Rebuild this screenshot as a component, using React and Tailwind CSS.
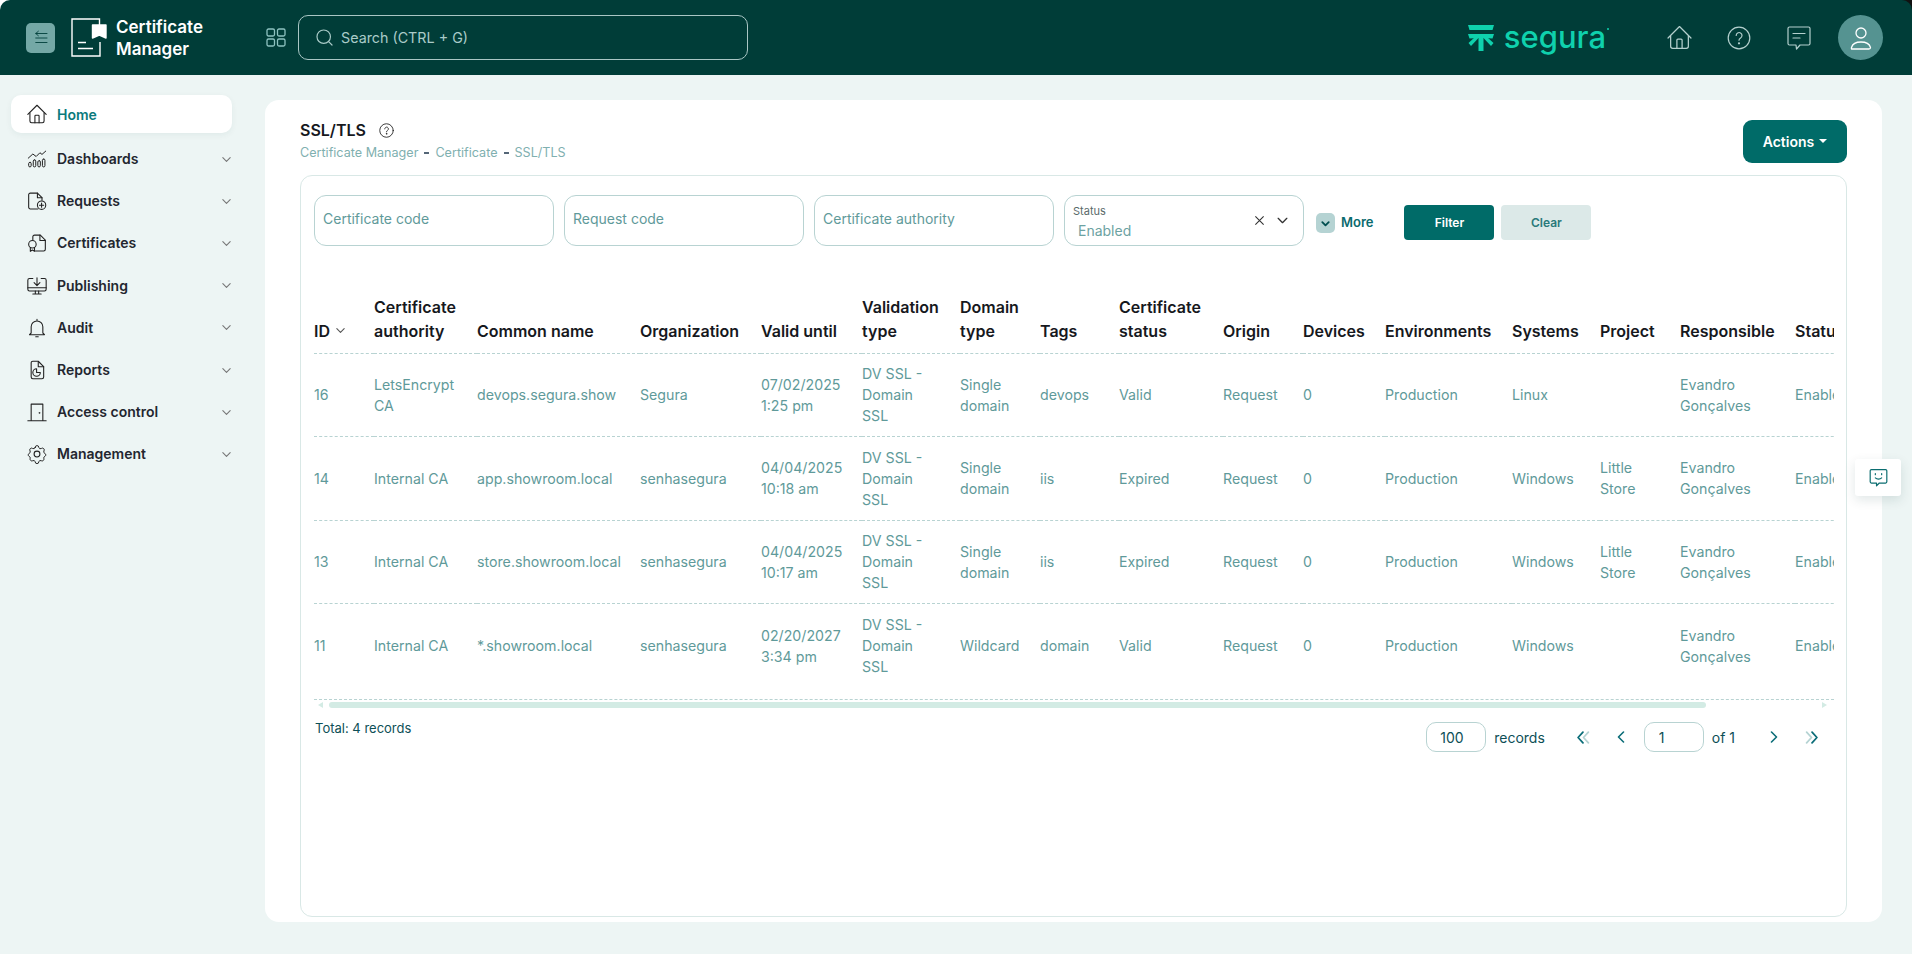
import React from "react";

const Svg = ({ className = "", children, vb = "0 0 24 24", sw = 1.4 }) => (
  <svg viewBox={vb} className={className} fill="none" stroke="currentColor" strokeWidth={sw} strokeLinecap="round" strokeLinejoin="round">
    {children}
  </svg>
);

const House = ({ className, sw }) => (
  <Svg className={className} sw={sw}>
    <path d="M1 12.500 12 1.500l11 11" />
    <path d="M3.500 10.500V20.500a2 2 0 0 0 2 2h13a2 2 0 0 0 2-2v-10" />
    <path d="M9.500 22.500v-8a1 1 0 0 1 1-1h3a1 1 0 0 1 1 1v8" />
  </Svg>
);
const Dash = ({ className }) => (
  <Svg className={className} sw={1.2}>
    <path d="M1.500 11 7 6l4 3 4.500-4.500 2.500 2 4.500-4" />
    <rect x="2" y="16" width="3" height="5.500" rx="1.500" />
    <rect x="7.500" y="13" width="3" height="8.500" rx="1.500" />
    <rect x="13" y="14" width="3" height="7.500" rx="1.500" />
    <rect x="18.500" y="12" width="3" height="9.500" rx="1.500" />
  </Svg>
);
const ReqIcon = ({ className }) => (
  <Svg className={className} sw={1.3}>
    <path d="M13 21.500H4a2 2 0 0 1-2-2v-15a2 2 0 0 1 2-2h8.500l5.500 5.500v3" />
    <path d="M12.500 2.500V8H18" />
    <circle cx="17.500" cy="17" r="5" />
    <path d="M17.500 14.500v5M15 17h5" />
  </Svg>
);
const CertIcon = ({ className }) => (
  <Svg className={className} sw={1.3}>
    <path d="M7 8V4.500a2 2 0 0 1 2-2h7l6 6v11a2 2 0 0 1-2 2H10" />
    <path d="M15.500 2.500V9H22" />
    <circle cx="6.500" cy="13.500" r="4.500" />
    <path d="M4 17.500V22l2.500-1.500L9 22v-4.500" />
  </Svg>
);
const Monitor = ({ className }) => (
  <Svg className={className} sw={1.3}>
    <path d="M7 3H3a2 2 0 0 0-2 2v11a2 2 0 0 0 2 2h18a2 2 0 0 0 2-2V5a2 2 0 0 0-2-2h-4" />
    <path d="M12 2v9M8.500 8l3.500 3.500L15.500 8" />
    <path d="M1 14h22M10 18v3.500M14 18v3.500M7 21.500h10" />
  </Svg>
);
const Bell = ({ className }) => (
  <Svg className={className} sw={1.3}>
    <path d="M12 1.500v2M5 18V10.500a7 7 0 0 1 14 0V18l2 2H3l2-2Z" />
    <path d="M10.500 22.500h3" />
  </Svg>
);
const Report = ({ className }) => (
  <Svg className={className} sw={1.3}>
    <path d="M13.500 1.500H7a2 2 0 0 0-2 2v17a2 2 0 0 0 2 2h11a2 2 0 0 0 2-2V8l-6.500-6.500Z" />
    <path d="M13.500 2v6H20" />
    <path d="M11.500 10.500a4.500 4.500 0 1 0 4.500 4.500h-4.500v-4.500Z" />
  </Svg>
);
const Door = ({ className }) => (
  <Svg className={className} sw={1.3}>
    <path d="M1 22.500h22M5 22.500V2.500h14v20" />
    <circle cx="15" cy="13" r=".4" />
  </Svg>
);
const Gear = ({ className }) => (
  <Svg className={className} sw={1.3}>
    <path d="M9.600 3.200a2.400 2.400 0 0 1 4.800 0 2.400 2.400 0 0 0 3.500 1.400 2.400 2.400 0 0 1 3.300 3.400 2.400 2.400 0 0 0 1.400 3.200 2.400 2.400 0 0 1 0 4 2.400 2.400 0 0 0-1.400 3.200 2.400 2.400 0 0 1-3.400 2.600 2.400 2.400 0 0 0-3.400 1.400 2.400 2.400 0 0 1-4.800 0 2.400 2.400 0 0 0-3.400-1.400 2.400 2.400 0 0 1-3.400-2.600 2.400 2.400 0 0 0-1.400-3.200 2.400 2.400 0 0 1 0-4 2.400 2.400 0 0 0 1.400-3.200 2.400 2.400 0 0 1 3.300-3.400 2.400 2.400 0 0 0 3.500-1.400Z" transform="translate(1.200 1.200) scale(.9)" />
    <circle cx="12" cy="12" r="3.500" />
  </Svg>
);
const Chev = ({ className }) => (
  <Svg className={className} vb="0 0 12 12" sw={1.2}>
    <path d="M2 4l4 4 4-4" />
  </Svg>
);
const Help = ({ className, sw }) => (
  <svg viewBox="0 0 24 24" className={className} fill="none" stroke="currentColor" strokeWidth={sw} strokeLinecap="round">
    <circle cx="12" cy="12" r="10.800" />
    <path d="M9.200 9.400a2.900 2.900 0 1 1 4.400 2.500c-1 .6-1.600 1.200-1.600 2.300" />
    <circle cx="12" cy="17.300" r=".5" fill="currentColor" />
  </svg>
);

const nav = [
  ["Dashboards", Dash],
  ["Requests", ReqIcon],
  ["Certificates", CertIcon],
  ["Publishing", Monitor],
  ["Audit", Bell],
  ["Reports", Report],
  ["Access control", Door],
  ["Management", Gear],
];

const cols = [
  ["ID", "w-[60px]"],
  ["Certificate authority", "w-[103px]"],
  ["Common name", "w-[163px]"],
  ["Organization", "w-[121px]"],
  ["Valid until", "w-[101px]"],
  ["Validation type", "w-[98px]"],
  ["Domain type", "w-[80px]"],
  ["Tags", "w-[79px]"],
  ["Certificate status", "w-[104px]"],
  ["Origin", "w-[80px]"],
  ["Devices", "w-[82px]"],
  ["Environments", "w-[127px]"],
  ["Systems", "w-[88px]"],
  ["Project", "w-[80px]"],
  ["Responsible", "w-[115px]"],
  ["Status", "w-[100px]"],
];

const rows = [
  ["16", "LetsEncrypt CA", "devops.segura.show", "Segura", "07/02/2025 1:25 pm", "DV SSL - Domain SSL", "Single domain", "devops", "Valid", "Request", "0", "Production", "Linux", "", "Evandro Gonçalves", "Enabled"],
  ["14", "Internal CA", "app.showroom.local", "senhasegura", "04/04/2025 10:18 am", "DV SSL - Domain SSL", "Single domain", "iis", "Expired", "Request", "0", "Production", "Windows", "Little Store", "Evandro Gonçalves", "Enabled"],
  ["13", "Internal CA", "store.showroom.local", "senhasegura", "04/04/2025 10:17 am", "DV SSL - Domain SSL", "Single domain", "iis", "Expired", "Request", "0", "Production", "Windows", "Little Store", "Evandro Gonçalves", "Enabled"],
  ["11", "Internal CA", "*.showroom.local", "senhasegura", "02/20/2027 3:34 pm", "DV SSL - Domain SSL", "Wildcard", "domain", "Valid", "Request", "0", "Production", "Windows", "", "Evandro Gonçalves", "Enabled"],
];

const Field = ({ placeholder }) => (
  <input
    readOnly
    placeholder={placeholder}
    className="w-[240px] h-[51px] shrink-0 rounded-[12px] border border-[#b8d3d2] bg-white pl-[8px] pr-[9px] pb-[4px] text-[14px] outline-none placeholder:text-[#5f9a9a]"
  />
);

export default function App() {
  return (
    <div className="h-screen w-full flex flex-col overflow-hidden bg-[#edf5f4] font-['Inter',sans-serif]">
      {/* top corners sit on the window frame */}
      <div className="bg-[linear-gradient(90deg,#ffffff_50%,#111111_50%)] shrink-0">
        <header className="h-[75px] flex items-center rounded-t-[10px] bg-[#003d38] pl-[26px] pr-[29px]">
          <button className="w-[29px] h-[30px] rounded-[5px] bg-[#74a8a6] flex items-center justify-center text-[#00403b] shrink-0">
            <Svg className="w-[18px] h-[18px]" sw={1.2}>
              <path d="M5 6h15M8.500 3 5 6l3.500 3M5 12h15M5 18h15" />
            </Svg>
          </button>
          <svg viewBox="0 0 36 39" className="w-[36px] h-[39px] ml-[16px] shrink-0 text-white" fill="none" stroke="currentColor" strokeWidth="1.400">
            <path d="M28.500 7V1H1v37h28V24" />
            <path d="M21.500 7h13.500v13l-6.700-3-6.800 3Z" fill="currentColor" strokeLinejoin="round" />
            <path d="M7 24.500h8M7 30.500h15" />
          </svg>
          <div className="ml-[9px] w-[150px] shrink-0 text-white text-[17px] font-semibold leading-[22px]">
            Certificate
            <br />
            Manager
          </div>
          <svg viewBox="0 0 20 19" className="w-[20px] h-[19px] shrink-0 text-[#8dc2c0]" fill="none" stroke="currentColor" strokeWidth="1.300">
            <rect x="1" y="1" width="7.500" height="7" rx="1.500" />
            <rect x="11.500" y="1" width="7.500" height="7" rx="1.500" />
            <rect x="1" y="11" width="7.500" height="7" rx="1.500" />
            <rect x="11.500" y="11" width="7.500" height="7" rx="1.500" />
          </svg>
          <div className="ml-[12px] w-[450px] h-[45px] shrink-0 rounded-[10px] border border-[#a9c6c4] flex items-center pl-[16px] gap-[7px] text-[#a9cbc8]">
            <Svg className="w-[19px] h-[19px]" sw={1.500}>
              <circle cx="11" cy="11" r="8.500" />
              <path d="m17.500 17.500 4 4" />
            </Svg>
            <span className="text-[14.300px]">Search (CTRL + G)</span>
          </div>
          <div className="ml-auto flex items-center">
            <svg viewBox="0 0 26 26" className="w-[26px] h-[26px] text-[#0fd1ad]" fill="currentColor">
              <path d="M0 0h26l-1.500 5H1.500Z" />
              <path d="M0 9h26l-1.500 4.500-9-.5V26h-5V13l-9 .5Z" />
              <path d="M10.500 13 3 21l-2.500-3L7 12ZM15.500 13 23 21l2.500-3L19 12Z" />
            </svg>
            <span className="ml-[10px] mb-[3px] text-[31px] leading-none font-medium text-[#0fd1ad]">
              segura
            </span>
            <span className="w-[2px] h-[2px] rounded-full bg-[#0fd1ad] ml-[1px] mb-[18px]" />
            <House className="w-[27px] h-[25px] ml-[57px] text-[#b4d0ce]" sw={1.200} />
            <Help className="w-[24px] h-[24px] ml-[34px] text-[#b4d0ce]" sw={1.200} />
            <Svg className="w-[24px] h-[24px] ml-[36px] text-[#b4d0ce]" sw={1.200}>
              <path d="M2.500 1h19A1.500 1.500 0 0 1 23 2.500v15a1.500 1.500 0 0 1-1.500 1.500H13l-3.500 4L9 19H2.500A1.500 1.500 0 0 1 1 17.500v-15A1.500 1.500 0 0 1 2.500 1Z" />
              <path d="M6 7.500h12M6 12h7" />
            </Svg>
            <div className="ml-[27px] w-[45px] h-[45px] rounded-full bg-[#559391] flex items-center justify-center text-white">
              <Svg className="w-[24px] h-[24px]" sw={1.300}>
                <circle cx="12" cy="7" r="5" />
                <path d="M2.500 23a3 3 0 0 1 0-1.500C3.500 18 7 16 12 16s8.500 2 9.500 5.500A1.500 1.500 0 0 1 20 23Z" />
              </Svg>
            </div>
          </div>
        </header>
      </div>

      <div className="flex-1 flex min-h-0">
        <aside className="w-[265px] shrink-0 pt-[20px] pl-[11px] pr-[33px]">
          <div className="h-[38px] rounded-[10px] bg-white shadow-[0_2px_6px_rgba(0,60,60,0.06)] flex items-center pl-[16px] gap-[10px]">
            <House className="w-[20px] h-[20px] text-[#222]" sw={1.300} />
            <span className="text-[14px] font-semibold text-[#0b7a7c]">Home</span>
          </div>
          <nav className="mt-[5px]">
            {nav.map(([label, Icon]) => (
              <div key={label} className="h-[42.200px] flex items-center pl-[16px] gap-[10px]">
                <Icon className="w-[20px] h-[20px] text-[#222]" />
                <span className="text-[14px] font-semibold text-[#23262f] flex-1 pb-[1px]">{label}</span>
                <Chev className="w-[11px] h-[11px] text-[#777]" />
              </div>
            ))}
          </nav>
        </aside>

        <main className="flex-1 min-w-0 pt-[25px] pr-[30px] pb-[32px]">
          <div className="h-full rounded-[14px] bg-white pl-[35px] pr-[35px] pb-[5px] flex flex-col">
            <div className="h-[75px] shrink-0 flex justify-between">
              <div className="pt-[20px]">
                <div className="flex items-center gap-[13px] text-[16px] font-semibold text-[#16181d] leading-[20px]">
                  SSL/TLS
                  <Help className="w-[15px] h-[15px] text-[#222]" sw={1.400} />
                </div>
                <div className="mt-[5px] text-[12.600px] leading-[16px] text-[#7fb0b0] flex items-center gap-[6px]">
                  <span>Certificate Manager</span>
                  <span className="w-[5px] h-[2px] bg-[#567]" />
                  <span>Certificate</span>
                  <span className="w-[5px] h-[2px] bg-[#567]" />
                  <span>SSL/TLS</span>
                </div>
              </div>
              <button className="mt-[20px] w-[104px] h-[43px] rounded-[9px] bg-[#006b68] text-white text-[14px] font-semibold flex items-center justify-center gap-[5px]">
                Actions
                <span className="w-0 h-0 border-x-[4px] border-x-transparent border-t-[4px] border-t-white mb-[2px]" />
              </button>
            </div>

            <section className="flex-1 min-h-0 rounded-[12px] border border-[#d9e8e6] pl-[13px] pr-[12px] pt-[19px]">
              <div className="flex items-start">
                <div className="flex gap-[10px]">
                  <Field placeholder="Certificate code" />
                  <Field placeholder="Request code" />
                  <Field placeholder="Certificate authority" />
                  <div className="w-[240px] h-[51px] shrink-0 rounded-[12px] border border-[#b8d3d2] relative flex items-center pr-[14px] justify-end gap-[11px]">
                    <div className="flex-1 pl-[8px] pt-[2px]">
                      <div className="text-[11px] leading-[14px] text-[#5a6a6a]">Status</div>
                      <div className="mt-[4px] pl-[5px] text-[14px] leading-[18px] text-[#6ca2a2]">Enabled</div>
                    </div>
                    <svg viewBox="0 0 12 12" className="w-[11px] h-[11px] text-[#333]" fill="none" stroke="currentColor" strokeWidth="1.200">
                      <path d="M1.500 1.500l9 9M10.500 1.500l-9 9" />
                    </svg>
                    <Chev className="w-[13px] h-[13px] text-[#333]" />
                  </div>
                </div>
                <div className="ml-[12px] mt-[18px] flex items-center gap-[6px]">
                  <span className="w-[19px] h-[20px] rounded-[5px] bg-[#b5d3d3] flex items-center justify-center text-[#004f50]">
                    <svg viewBox="0 0 12 12" className="w-[11px] h-[11px]" fill="none" stroke="currentColor" strokeWidth="2" strokeLinecap="round" strokeLinejoin="round">
                      <path d="M2.500 4.500 6 8l3.500-3.500" />
                    </svg>
                  </span>
                  <span className="text-[13px] font-semibold text-[#0a6a6e]">More</span>
                </div>
                <button className="ml-[31px] mt-[10px] w-[90px] h-[35px] rounded-[4px] bg-[#006b68] text-white text-[12px] font-semibold">Filter</button>
                <button className="ml-[7px] mt-[10px] w-[90px] h-[35px] rounded-[4px] bg-[#dce9e8] text-[#2a7a7a] text-[12px] font-semibold">Clear</button>
              </div>

              <div className="mt-[37px] overflow-hidden border-b border-dashed border-[#b8d3d2] pb-[12px]">
                <table className="table-fixed w-[1581px] border-collapse text-left">
                  <thead>
                    <tr className="h-[70px]">
                      {cols.map(([h, w]) => (
                        <th key={h} className={`${w} align-bottom pb-[10px] pr-[12px] text-[16px] leading-[24px] font-semibold text-[#16181d] border-b border-dashed border-[#b8d3d2]`}>
                          {h === "ID" ? (
                            <span className="inline-flex items-center gap-[5px]">
                              ID <Chev className="w-[11px] h-[11px] text-[#555]" />
                            </span>
                          ) : (
                            h
                          )}
                        </th>
                      ))}
                    </tr>
                  </thead>
                  <tbody>
                    {rows.map((r, ri) => (
                      <tr key={r[0]} className="h-[83.500px]">
                        {r.map((c, i) => (
                          <td key={i} className={`pr-[18px] text-[14.200px] leading-[21px] text-[#5f9a9a] ${ri < rows.length - 1 ? "border-b border-dashed border-[#b8d3d2]" : ""}`}>
                            {c}
                          </td>
                        ))}
                      </tr>
                    ))}
                  </tbody>
                </table>
              </div>

              <div className="mt-[2px] h-[6px] flex items-center">
                <span className="ml-[4px] w-0 h-0 border-y-[3px] border-y-transparent border-r-[5px] border-r-[#d3ebe4]" />
                <span className="ml-[6px] w-[1377px] h-[6px] rounded-full bg-[#d3ebe4]" />
                <span className="ml-[116px] w-0 h-0 border-y-[3px] border-y-transparent border-l-[5px] border-l-[#d3ebe4]" />
              </div>

              <div className="mt-[14px] flex justify-between items-start pr-[16px]">
                <div className="pl-[1px] -mt-[2px] text-[13px] leading-[16px] text-[#0d4f56]">Total: 4 records</div>
                <div className="flex items-center text-[#0d4f56]">
                  <input readOnly value="100" className="w-[60px] h-[30px] rounded-[10px] border border-[#b8d3d2] pl-[13px] text-[14px] outline-none" />
                  <span className="ml-[8px] text-[14px]">records</span>
                  <svg viewBox="0 0 12 12" className="ml-[32px] w-[13px] h-[13px]" fill="none" strokeWidth="1.600" strokeLinecap="round" strokeLinejoin="round">
                    <path d="M5.500 1 1 6l4.500 5" stroke="#0b6d78" />
                    <path d="M10.500 1 6 6l4.500 5" stroke="#b5d3d3" />
                  </svg>
                  <svg viewBox="0 0 8 12" className="ml-[27px] w-[8px] h-[12px] text-[#0b6d78]" fill="none" stroke="currentColor" strokeWidth="1.600" strokeLinecap="round" strokeLinejoin="round">
                    <path d="M6.500 1 1.500 6l5 5" />
                  </svg>
                  <input readOnly value="1" className="ml-[19px] w-[60px] h-[30px] rounded-[10px] border border-[#b8d3d2] pl-[14px] text-[14px] outline-none" />
                  <span className="ml-[8px] text-[14px]">of 1</span>
                  <svg viewBox="0 0 8 12" className="ml-[35px] w-[8px] h-[12px] text-[#0b6d78]" fill="none" stroke="currentColor" strokeWidth="1.600" strokeLinecap="round" strokeLinejoin="round">
                    <path d="M1.500 1l5 5-5 5" />
                  </svg>
                  <svg viewBox="0 0 12 12" className="ml-[27px] w-[13px] h-[13px]" fill="none" strokeWidth="1.600" strokeLinecap="round" strokeLinejoin="round">
                    <path d="M1.500 1 6 6l-4.500 5" stroke="#b5d3d3" />
                    <path d="M6.500 1 11 6l-4.500 5" stroke="#0b6d78" />
                  </svg>
                </div>
              </div>
            </section>
          </div>
        </main>
      </div>

      <div className="absolute left-[1855px] top-[459px] w-[46px] h-[37px] rounded-[3px] bg-white shadow-[0_4px_12px_rgba(0,60,60,0.12)] flex items-center justify-center text-[#0b6d70]">
        <Svg className="w-[19px] h-[19px]" sw={1.500}>
          <path d="M3 2h18a1.500 1.500 0 0 1 1.500 1.500v14A1.500 1.500 0 0 1 21 19h-8l-3.500 3.500V19H3a1.500 1.500 0 0 1-1.500-1.500v-14A1.500 1.500 0 0 1 3 2Z" />
          <path d="M8 7v1.500M16 7v1.500M8 12.500c2 2 6 2 8 0" />
        </Svg>
      </div>
    </div>
  );
}
